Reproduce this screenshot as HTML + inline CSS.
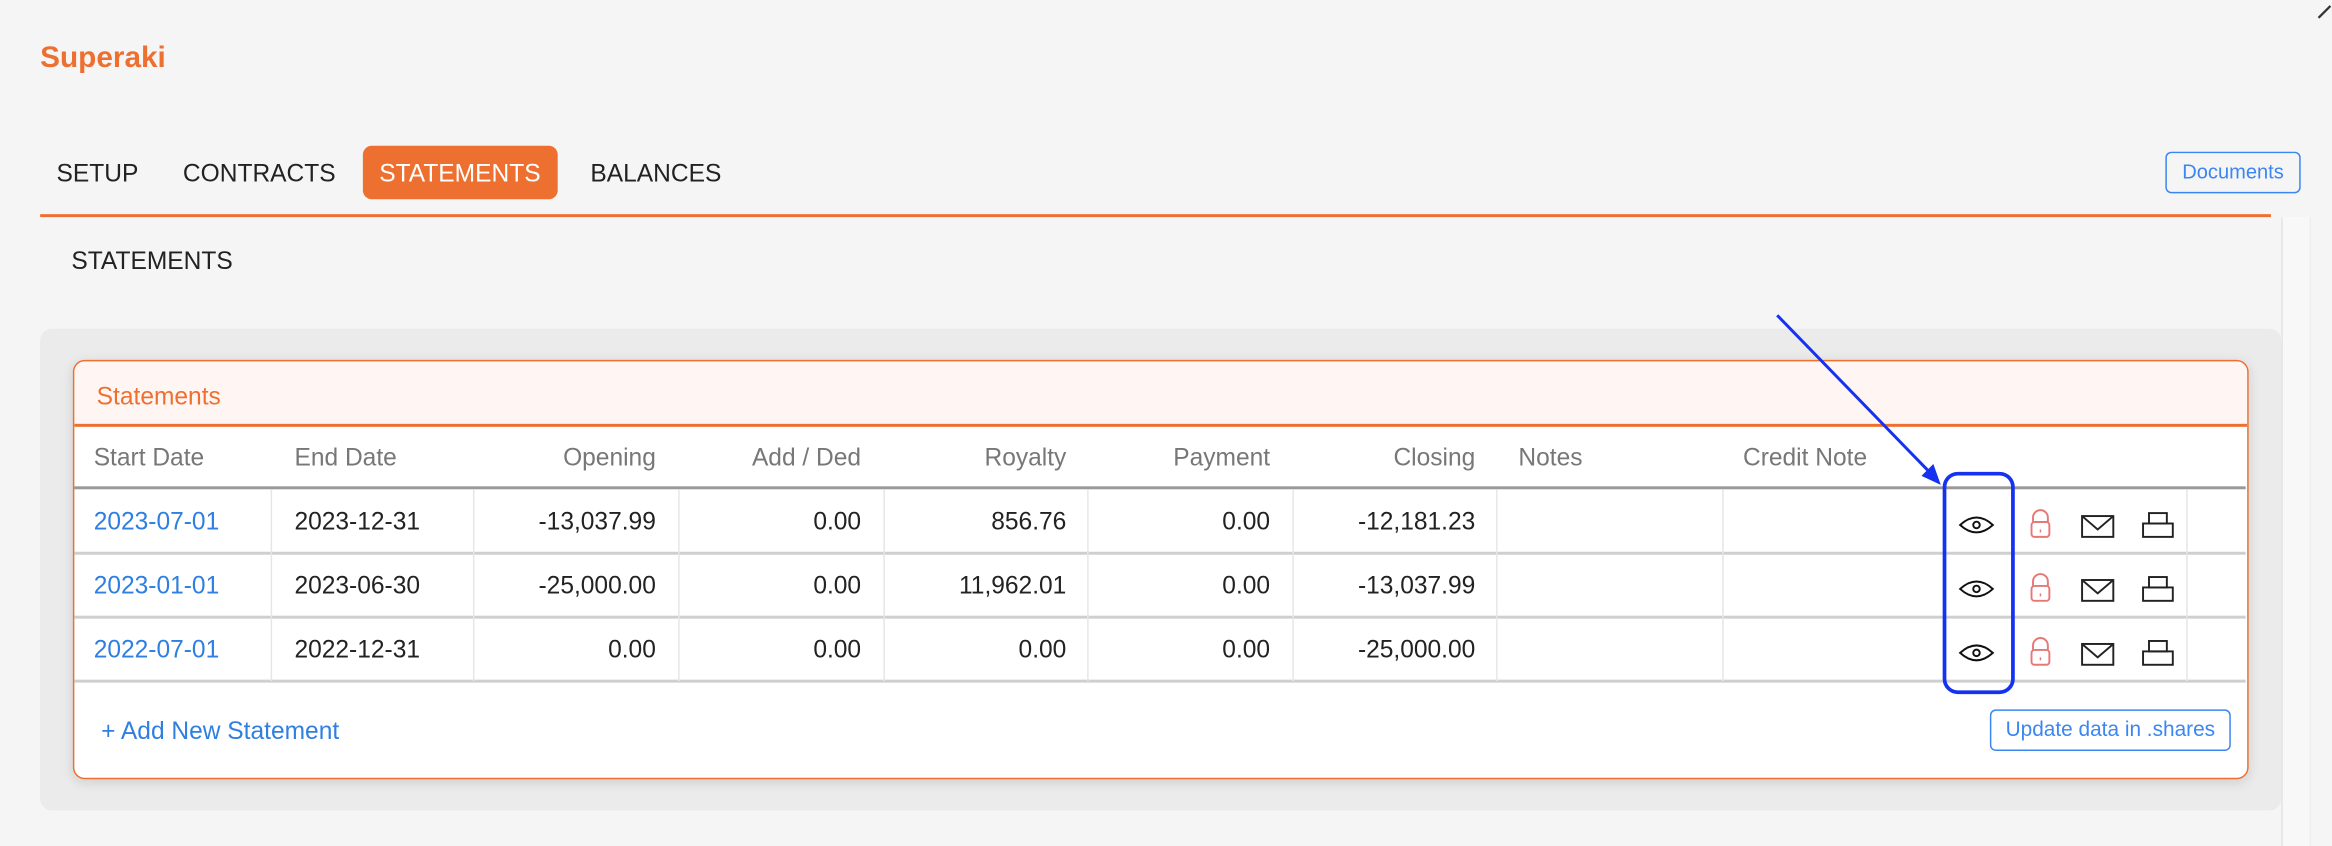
<!DOCTYPE html>
<html><head><meta charset="utf-8"><style>
*{margin:0;padding:0;box-sizing:border-box}
html,body{width:2332px;height:846px;overflow:hidden;background:#f5f5f5}
#w{position:absolute;left:0;top:0;width:1568px;height:569px;transform:scale(1.4872);transform-origin:0 0;font-family:"Liberation Sans",sans-serif;color:#222}
.a{position:absolute;white-space:nowrap}
.t{font-size:16.5px;top:108px}
.vl{position:absolute;top:329px;height:129px;width:1px;background:#e6e6e6}
.hd{position:absolute;top:299px;font-size:16.5px;color:#777}
.c{position:absolute;font-size:16.5px;color:#222}
.r{text-align:right}
.bl{color:#2f7fe0}
</style></head><body><div id="w">
<div class="a" style="left:27px;top:28px;font-size:20px;font-weight:bold;color:#ee7030">Superaki</div>
<div class="a" style="left:1556px;top:0;width:12px;height:12px"><svg width="12" height="12"><path d="M3 11 L11 3" stroke="#333" stroke-width="1.5"/></svg></div>
<div class="a t" style="left:38px">SETUP</div>
<div class="a t" style="left:123px">CONTRACTS</div>
<div class="a" style="left:244px;top:98px;width:131px;height:36px;background:#ee7030;border-radius:6px"></div>
<div class="a t" style="left:255px;color:#fff">STATEMENTS</div>
<div class="a t" style="left:397px">BALANCES</div>
<div class="a" style="left:1456px;top:102px;width:91px;height:28px;border:1.5px solid #3b86f0;border-radius:4px;color:#3b86f0;font-size:13.5px;text-align:center;line-height:25px">Documents</div>
<div class="a" style="left:27px;top:144px;width:1500px;height:2px;background:#ee7030"></div>
<div class="a" style="left:1534px;top:146px;width:20px;height:423px;background:#f8f8f8;border-left:1px solid #e4e4e4;border-right:1px solid #eeeeee"></div>
<div class="a" style="left:48px;top:167px;font-size:16.5px">STATEMENTS</div>
<div class="a" style="left:27px;top:221px;width:1507px;height:324px;background:#ebebeb;border-radius:8px"></div>
<div class="a" style="left:49px;top:242px;width:1463px;height:282px;background:#fff;border:1.5px solid #ee7030;border-radius:8px;overflow:hidden;box-shadow:0 2px 8px rgba(0,0,0,.12)">
 <div style="height:44px;background:#fff5f2;border-bottom:2px solid #ee7030"></div>
</div>
<div class="a" style="left:65px;top:258px;font-size:16.5px;color:#ee7030">Statements</div>
<div class="hd" style="left:63px">Start Date</div>
<div class="hd" style="left:198px">End Date</div>
<div class="hd r" style="right:1127px">Opening</div>
<div class="hd r" style="right:989px">Add / Ded</div>
<div class="hd r" style="right:851px">Royalty</div>
<div class="hd r" style="right:714px">Payment</div>
<div class="hd r" style="right:576px">Closing</div>
<div class="hd" style="left:1021px">Notes</div>
<div class="hd" style="left:1172px">Credit Note</div>
<div class="a" style="left:50px;top:327px;width:1460px;height:2px;background:#999"></div>
<div class="a" style="left:50px;top:371px;width:1460px;height:2px;background:#cfcfcf"></div>
<div class="a" style="left:50px;top:414px;width:1460px;height:2px;background:#cfcfcf"></div>
<div class="a" style="left:50px;top:457px;width:1460px;height:2px;background:#cfcfcf"></div>
<div class="vl" style="left:182px"></div><div class="vl" style="left:318px"></div><div class="vl" style="left:456px"></div><div class="vl" style="left:594px"></div><div class="vl" style="left:731px"></div><div class="vl" style="left:869px"></div><div class="vl" style="left:1006px"></div><div class="vl" style="left:1158px"></div><div class="vl" style="left:1470px"></div>

<div class="c bl" style="left:63px;top:342px">2023-07-01</div>
<div class="c" style="left:198px;top:342px">2023-12-31</div>
<div class="c r" style="right:1127px;top:342px">-13,037.99</div>
<div class="c r" style="right:989px;top:342px">0.00</div>
<div class="c r" style="right:851px;top:342px">856.76</div>
<div class="c r" style="right:714px;top:342px">0.00</div>
<div class="c r" style="right:576px;top:342px">-12,181.23</div>

<div class="c bl" style="left:63px;top:385px">2023-01-01</div>
<div class="c" style="left:198px;top:385px">2023-06-30</div>
<div class="c r" style="right:1127px;top:385px">-25,000.00</div>
<div class="c r" style="right:989px;top:385px">0.00</div>
<div class="c r" style="right:851px;top:385px">11,962.01</div>
<div class="c r" style="right:714px;top:385px">0.00</div>
<div class="c r" style="right:576px;top:385px">-13,037.99</div>

<div class="c bl" style="left:63px;top:428px">2022-07-01</div>
<div class="c" style="left:198px;top:428px">2022-12-31</div>
<div class="c r" style="right:1127px;top:428px">0.00</div>
<div class="c r" style="right:989px;top:428px">0.00</div>
<div class="c r" style="right:851px;top:428px">0.00</div>
<div class="c r" style="right:714px;top:428px">0.00</div>
<div class="c r" style="right:576px;top:428px">-25,000.00</div>

<svg class="a" style="left:0;top:0" width="1568" height="569">
 <defs>
  <g id="ic">
   <path d="M1318 0 Q1329 -10 1340 0 Q1329 10 1318 0Z" fill="none" stroke="#111" stroke-width="1.3"/>
   <circle cx="1329" cy="0" r="2.2" fill="none" stroke="#111" stroke-width="1.3"/>
   <path d="M1367 -2 V-5 A5 5 0 0 1 1377 -5 V-2" fill="none" stroke="#e87878" stroke-width="1.3"/>
   <rect x="1366" y="-2" width="12" height="10" rx="2" fill="none" stroke="#e87878" stroke-width="1.3"/>
   <rect x="1371.5" y="3" width="1" height="2" fill="#e87878"/>
   <rect x="1400" y="-6" width="21" height="14" fill="none" stroke="#222" stroke-width="1.3"/>
   <path d="M1400 -6 L1410.5 3 L1421 -6" fill="none" stroke="#222" stroke-width="1.3"/>
   <rect x="1445" y="-8" width="12" height="7" fill="none" stroke="#222" stroke-width="1.3"/>
   <rect x="1441" y="-1" width="20" height="9" fill="none" stroke="#222" stroke-width="1.3"/>
  </g>
 </defs>
 <use href="#ic" y="353"/><use href="#ic" y="396"/><use href="#ic" y="439"/>
 <rect x="1307.5" y="318.5" width="46" height="147" rx="9" fill="none" stroke="#1432f0" stroke-width="2.5"/>
 <line x1="1195" y1="212" x2="1297" y2="317" stroke="#1432f0" stroke-width="2"/>
 <path d="M1305 326 L1292 320 L1300 312Z" fill="#1432f0"/>
</svg>

<div class="a bl" style="left:68px;top:483px;font-size:16.5px">+ Add New Statement</div>
<div class="a" style="left:1338px;top:477px;width:162px;height:28px;border:1.5px solid #3b86f0;border-radius:4px;color:#3b86f0;font-size:14px;text-align:center;line-height:25px">Update data in .shares</div>
</div></body></html>
